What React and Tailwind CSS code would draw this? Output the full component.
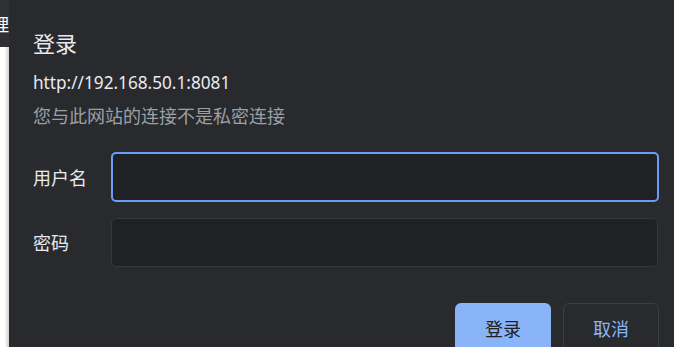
export default function App() {
  const cjk = { fontFamily: '"Noto Sans CJK SC", sans-serif' };
  return (
    <div className="w-[674px] h-[347px] overflow-hidden flex bg-white" style={{ fontFamily: '"Noto Sans", "Noto Sans CJK SC", sans-serif' }}>
      <div className="w-[9px] shrink-0 flex flex-col">
        <div className="h-[47px] bg-[#2f3034] flex justify-end overflow-hidden pt-[13px]">
          <span className="text-[17px] leading-[22px] text-white whitespace-nowrap" style={cjk}>理</span>
        </div>
        <div className="flex-1 bg-gradient-to-r from-white via-white to-[#d0d0d0]" />
      </div>
      <div className="w-[674px] shrink-0 bg-[#292a2d] pl-[24px] pr-[24px] pt-[27px] flex flex-col">
        <div className="text-[22px] leading-[30px] text-[#e8eaed]" style={cjk}>登录</div>
        <div className="mt-[14px] text-[17.2px] leading-[24px] text-[#e8eaed]">http://192.168.50.1:8081</div>
        <div className="mt-[8px] text-[18px] leading-[24px] text-[#9aa0a6]" style={cjk}>您与此网站的连接不是私密连接</div>
        <div className="mt-[25px] flex items-center">
          <div className="w-[78px] shrink-0 text-[18px] text-[#e8eaed]" style={cjk}>用户名</div>
          <div className="flex-1 h-[50px] rounded-[5px] border-2 border-[#6a9ef5] bg-[#202124]" />
        </div>
        <div className="mt-[16px] flex items-center">
          <div className="w-[78px] shrink-0 text-[18px] text-[#e8eaed]" style={cjk}>密码</div>
          <div className="flex-1 h-[49px] rounded-[5px] border border-[#37383c] bg-[#202124] mr-[1px]" />
        </div>
        <div className="mt-[36px] flex justify-end gap-3">
          <div className="w-[96px] h-[50px] rounded-[6px] bg-[#8ab4f8] flex items-center justify-center text-[18px] text-[#202124]" style={cjk}>登录</div>
          <div className="w-[96px] h-[50px] rounded-[6px] border border-[#3c4043] flex items-center justify-center text-[18px] text-[#8ab4f8]" style={cjk}>取消</div>
        </div>
      </div>
    </div>
  );
}
